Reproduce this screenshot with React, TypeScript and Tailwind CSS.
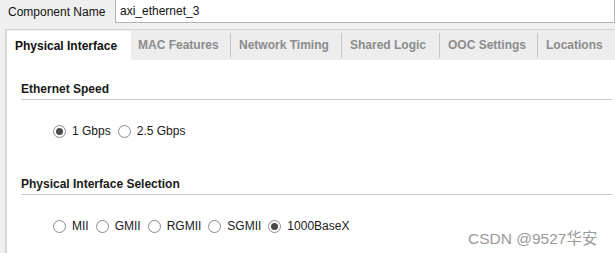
import React from "react";

const tabs = [
  { label: "Physical Interface", w: "w-[124px]", active: true },
  { label: "MAC Features", w: "w-[100px]" },
  { label: "Network Timing", w: "w-[111px]" },
  { label: "Shared Logic", w: "w-[98px]" },
  { label: "OOC Settings", w: "w-[98px]" },
  { label: "Locations", w: "w-[77px]" },
];

const Radio = ({ label, checked }: { label: string; checked?: boolean }) => (
  <label className="flex items-center gap-[6px] mr-[7px]">
    <span className="w-[13px] h-[13px] rounded-full border border-[#8a8a8a] bg-white flex items-center justify-center">
      {checked && <span className="w-[7px] h-[7px] rounded-full bg-[#4a4a4a]" />}
    </span>
    <span className="text-[12px] text-[#1a1a1a] leading-[16px]">{label}</span>
  </label>
);

const Section = ({ title }: { title: string }) => (
  <div className="text-[12px] font-bold text-[#1a1a1a] leading-[14px] pb-[3px] border-b border-[#c8c8c8] mr-[3px]">
    {title}
  </div>
);

export default function App() {
  return (
    <div
      className="relative w-[615px] h-[253px] overflow-hidden bg-[#f0f0f0]"
      style={{ fontFamily: '"Liberation Sans", Arial, sans-serif' }}
    >
      {/* component name */}
      <div className="flex items-center h-[23px]">
        <span className="w-[115px] pl-[8px] text-[12px] text-[#111]">Component Name</span>
        <div className="flex-1 h-[25px] -mt-[2px] bg-white border border-[#b4b4b4] pl-[4px] flex items-center text-[12px] text-[#111]">
          axi_ethernet_3
        </div>
      </div>

      {/* tab panel */}
      <div className="mt-[6px] ml-[5px] border-t border-l-2 border-[#d6d6d6] bg-white h-[230px]">
        <div className="flex h-[30px] bg-[#ededed]">
          {tabs.map((t, i) => (
            <div
              key={t.label}
              className={`${t.w} shrink-0 flex items-center ${
                t.active ? "bg-white pl-[8px] mt-[1px]" : "pl-[7px]"
              }`}
            >
              {i > 1 && <span className="w-px h-[25px] bg-[#c6c6c6] -ml-[8px] mr-[8px]" />}
              <span
                className={`text-[12px] font-bold ${
                  t.active ? "text-[#111]" : "text-[#8c8c8c]"
                }`}
              >
                {t.label}
              </span>
            </div>
          ))}
        </div>

        <div className="pl-[14px]">
          <div className="pt-[22px]">
            <Section title="Ethernet Speed" />
          </div>
          <div className="flex mt-[23px] ml-[32px]">
            <Radio label="1 Gbps" checked />
            <Radio label="2.5 Gbps" />
          </div>

          <div className="mt-[38px]">
            <Section title="Physical Interface Selection" />
          </div>
          <div className="flex mt-[23px] ml-[32px]">
            <Radio label="MII" />
            <Radio label="GMII" />
            <Radio label="RGMII" />
            <Radio label="SGMII" />
            <Radio label="1000BaseX" checked />
          </div>
        </div>
      </div>

      <span
        className="absolute left-[468px] top-[227px] text-[15.5px] text-[#9a9a9a] whitespace-nowrap"
        style={{ fontFamily: '"Liberation Sans", "Noto Sans CJK SC", sans-serif' }}
      >
        CSDN @9527华安
      </span>
    </div>
  );
}
